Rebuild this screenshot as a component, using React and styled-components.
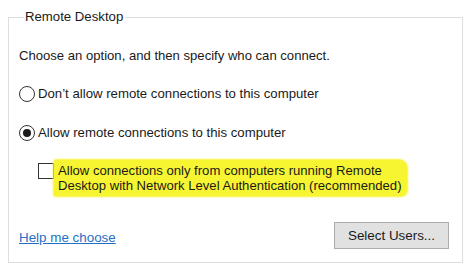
import React from 'react';
import styled, { createGlobalStyle } from 'styled-components';

const Global = createGlobalStyle`
  body {
    margin: 0;
    background: #fff;
    font-family: "Liberation Sans", Arial, sans-serif;
    color: #1a1a1a;
  }
`;

const Page = styled.div`
  width: 474px;
  height: 275px;
  padding: 9px 0 0 8px;
  box-sizing: border-box;
  overflow: hidden;
`;

const Group = styled.fieldset`
  width: 455px;
  height: 254px;
  box-sizing: border-box;
  margin: 0;
  padding: 0 0 0 10px;
  border: 1px solid #dedede;
  min-inline-size: 0;
  display: flex;
  flex-direction: column;
`;

const Legend = styled.legend`
  font-size: 13.2px;
  padding: 0 2px 0 1px;
  margin-left: 5px;
  line-height: 16px;
`;

const Intro = styled.div`
  font-size: 13.1px;
  margin-top: 23px;
  line-height: 16px;
`;

const Option = styled.label`
  display: flex;
  align-items: center;
  gap: 3px;
  font-size: 13.2px;
  line-height: 16px;
  margin-top: ${(p) => p.$top}px;
`;

const Radio = styled.span`
  width: 16px;
  height: 16px;
  box-sizing: border-box;
  border: 1px solid #333;
  border-radius: 50%;
  background: #fff;
  display: flex;
  align-items: center;
  justify-content: center;
  &::after {
    content: '';
    display: ${(p) => (p.$checked ? 'block' : 'none')};
    width: 8px;
    height: 8px;
    border-radius: 50%;
    background: #1a1a1a;
  }
`;

const NlaRow = styled.div`
  display: flex;
  align-items: flex-start;
  margin: 19px 0 0 19px;
`;

const Check = styled.span`
  width: 16px;
  height: 16px;
  flex: none;
  box-sizing: border-box;
  border: 1px solid #333;
  background: #fff;
  margin-top: 3px;
`;

const Highlight = styled.span`
  background: #f7f432;
  font-size: 13.1px;
  line-height: 15px;
  padding: 3px 5px 3px 4px;
  margin-left: 0;
  border-radius: 3px 8px 6px 2px;
  box-shadow: 0 0 2px 1px #f7f432;
`;

const Footer = styled.div`
  margin-top: auto;
  display: flex;
  justify-content: space-between;
  align-items: center;
  padding: 0 13px 13px 0;
`;

const Link = styled.a`
  color: #1f6fc5;
  font-size: 13.4px;
  text-decoration: underline;
  cursor: pointer;
  margin-top: 3px;
`;

const Button = styled.button`
  width: 115px;
  height: 27px;
  font-family: inherit;
  font-size: 13.4px;
  color: #1a1a1a;
  background: #e1e1e1;
  border: 1px solid #adadad;
`;

export default function App() {
  return (
    <Page>
      <Global />
      <Group>
        <Legend>Remote Desktop</Legend>
        <Intro>Choose an option, and then specify who can connect.</Intro>
        <Option $top={22}>
          <Radio />
          Don’t allow remote connections to this computer
        </Option>
        <Option $top={23}>
          <Radio $checked />
          Allow remote connections to this computer
        </Option>
        <NlaRow>
          <Check />
          <Highlight>
            Allow connections only from computers running Remote
            <br />
            Desktop with Network Level Authentication (recommended)
          </Highlight>
        </NlaRow>
        <Footer>
          <Link>Help me choose</Link>
          <Button>Select Users...</Button>
        </Footer>
      </Group>
    </Page>
  );
}
